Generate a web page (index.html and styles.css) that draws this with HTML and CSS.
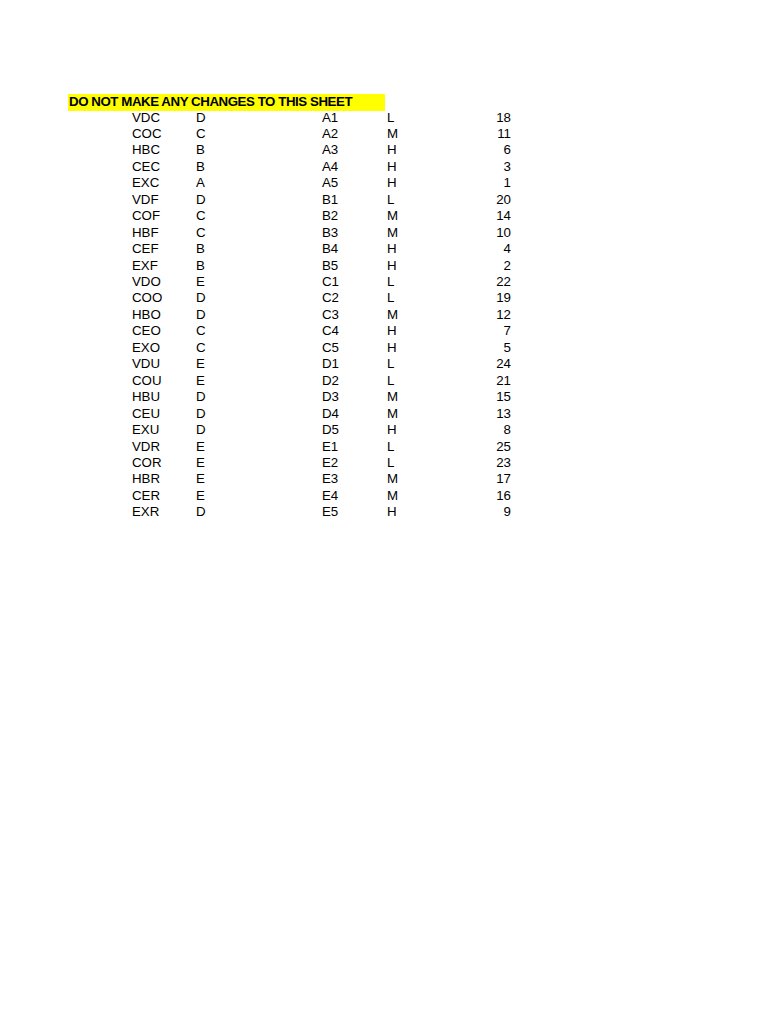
FILE: index.html
```html
<!DOCTYPE html>
<html>
<head>
<meta charset="utf-8">
<link rel="stylesheet" href="styles.css">
</head>
<body>
<div class="sheet">
  <div class="banner">DO NOT MAKE ANY CHANGES TO THIS SHEET</div>
  <div class="grid">
    <span>VDC</span><span>D</span><span>A1</span><span>L</span><span class="num">18</span>
    <span>COC</span><span>C</span><span>A2</span><span>M</span><span class="num">11</span>
    <span>HBC</span><span>B</span><span>A3</span><span>H</span><span class="num">6</span>
    <span>CEC</span><span>B</span><span>A4</span><span>H</span><span class="num">3</span>
    <span>EXC</span><span>A</span><span>A5</span><span>H</span><span class="num">1</span>
    <span>VDF</span><span>D</span><span>B1</span><span>L</span><span class="num">20</span>
    <span>COF</span><span>C</span><span>B2</span><span>M</span><span class="num">14</span>
    <span>HBF</span><span>C</span><span>B3</span><span>M</span><span class="num">10</span>
    <span>CEF</span><span>B</span><span>B4</span><span>H</span><span class="num">4</span>
    <span>EXF</span><span>B</span><span>B5</span><span>H</span><span class="num">2</span>
    <span>VDO</span><span>E</span><span>C1</span><span>L</span><span class="num">22</span>
    <span>COO</span><span>D</span><span>C2</span><span>L</span><span class="num">19</span>
    <span>HBO</span><span>D</span><span>C3</span><span>M</span><span class="num">12</span>
    <span>CEO</span><span>C</span><span>C4</span><span>H</span><span class="num">7</span>
    <span>EXO</span><span>C</span><span>C5</span><span>H</span><span class="num">5</span>
    <span>VDU</span><span>E</span><span>D1</span><span>L</span><span class="num">24</span>
    <span>COU</span><span>E</span><span>D2</span><span>L</span><span class="num">21</span>
    <span>HBU</span><span>D</span><span>D3</span><span>M</span><span class="num">15</span>
    <span>CEU</span><span>D</span><span>D4</span><span>M</span><span class="num">13</span>
    <span>EXU</span><span>D</span><span>D5</span><span>H</span><span class="num">8</span>
    <span>VDR</span><span>E</span><span>E1</span><span>L</span><span class="num">25</span>
    <span>COR</span><span>E</span><span>E2</span><span>L</span><span class="num">23</span>
    <span>HBR</span><span>E</span><span>E3</span><span>M</span><span class="num">17</span>
    <span>CER</span><span>E</span><span>E4</span><span>M</span><span class="num">16</span>
    <span>EXR</span><span>D</span><span>E5</span><span>H</span><span class="num">9</span>
  </div>
</div>
</body>
</html>
```
FILE: styles.css
```css
html, body {
  margin: 0;
  padding: 0;
  background: #ffffff;
}
.sheet {
  padding: 94px 0 0 68px;
  font-family: "Liberation Sans", Arial, sans-serif;
  font-size: 13.3px;
  color: #000000;
}
.banner {
  width: 317px;
  height: 16.5px;
  line-height: 16.5px;
  background: #ffff00;
  font-weight: bold;
  letter-spacing: -0.45px;
  padding-left: 1px;
  box-sizing: border-box;
  white-space: nowrap;
}
.grid {
  display: grid;
  padding-left: 64px;
  grid-template-columns: 64px 126px 65px 64px 60px;
  grid-auto-rows: 16.46px;
  line-height: 13.5px;
}
.grid .num {
  text-align: right;
}
```
